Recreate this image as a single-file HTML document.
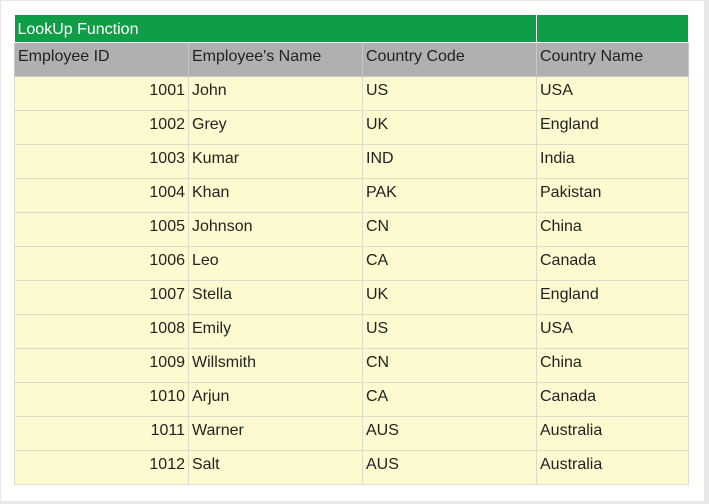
<!DOCTYPE html><html><head><style>
body{margin:0;width:709px;height:504px;background:#e8e8e8;font-family:"Liberation Sans",sans-serif;overflow:hidden}
.card{position:absolute;left:1px;top:1px;width:703px;height:500px;background:#fff;}
table{position:absolute;left:14px;top:15px;border-collapse:collapse;font-size:16px;color:#222}
td{padding:0 3px;border:1px solid #dcdcc8;height:33px;box-sizing:border-box}
tr.t td{background:#0f9d48;color:#fff;height:27px;border:1px solid #fff;border-top:none;border-left:none;padding-top:3px}
tr.t td:first-child{border-left:none}
tr.h td{background:#b0b0b0;height:34px;border:1px solid #c8c8c8;vertical-align:top;padding-top:5px}
tr.d td{background:#fdfad0;height:34px;padding-bottom:4px}
td.n{text-align:right}
</style></head><body><div class="card"></div>
<table>
<colgroup><col style="width:174px"><col style="width:174px"><col style="width:174px"><col style="width:152px"></colgroup>
<tr class="t"><td colspan="3">LookUp Function</td><td></td></tr>
<tr class="h"><td>Employee ID</td><td>Employee's Name</td><td>Country Code</td><td>Country Name</td></tr>
<tr class="d"><td class="n">1001</td><td>John</td><td>US</td><td>USA</td></tr>
<tr class="d"><td class="n">1002</td><td>Grey</td><td>UK</td><td>England</td></tr>
<tr class="d"><td class="n">1003</td><td>Kumar</td><td>IND</td><td>India</td></tr>
<tr class="d"><td class="n">1004</td><td>Khan</td><td>PAK</td><td>Pakistan</td></tr>
<tr class="d"><td class="n">1005</td><td>Johnson</td><td>CN</td><td>China</td></tr>
<tr class="d"><td class="n">1006</td><td>Leo</td><td>CA</td><td>Canada</td></tr>
<tr class="d"><td class="n">1007</td><td>Stella</td><td>UK</td><td>England</td></tr>
<tr class="d"><td class="n">1008</td><td>Emily</td><td>US</td><td>USA</td></tr>
<tr class="d"><td class="n">1009</td><td>Willsmith</td><td>CN</td><td>China</td></tr>
<tr class="d"><td class="n">1010</td><td>Arjun</td><td>CA</td><td>Canada</td></tr>
<tr class="d"><td class="n">1011</td><td>Warner</td><td>AUS</td><td>Australia</td></tr>
<tr class="d"><td class="n">1012</td><td>Salt</td><td>AUS</td><td>Australia</td></tr>
</table></body></html>
